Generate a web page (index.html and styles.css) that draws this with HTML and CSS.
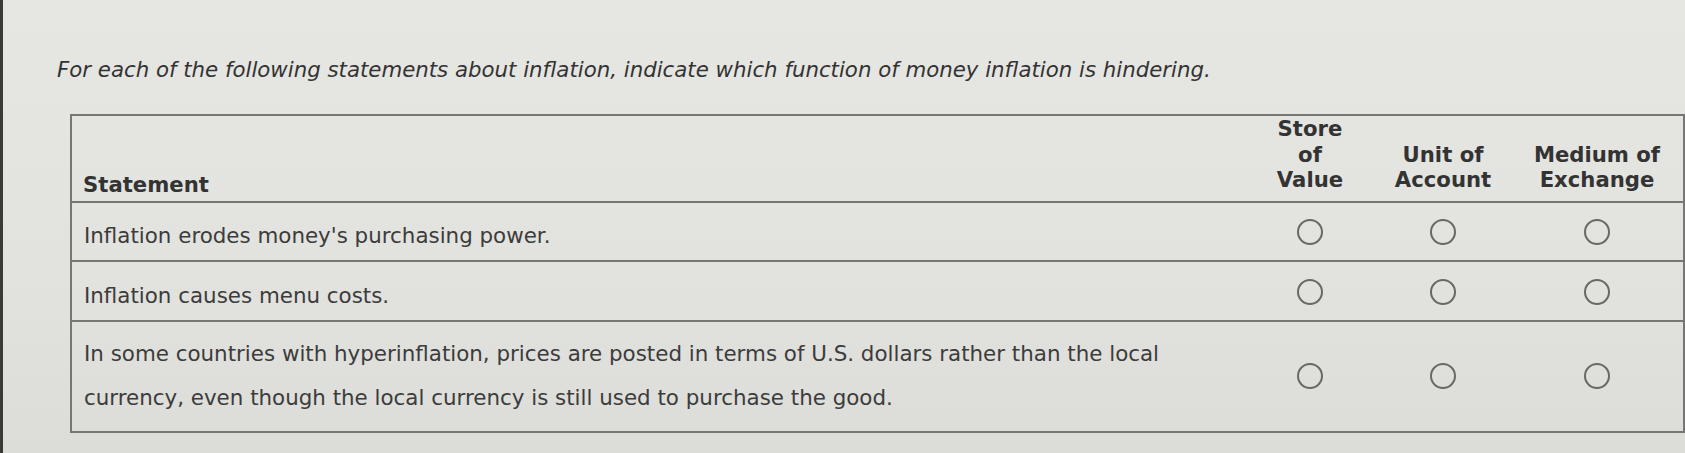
FILE: index.html
```html
<!DOCTYPE html>
<html>
<head>
<meta charset="utf-8">
<link rel="stylesheet" href="styles.css">
</head>
<body>
<div class="page">
  <p class="prompt">For each of the following statements about inflation, indicate which function of money inflation is hindering.</p>
  <table class="grid">
    <colgroup>
      <col class="c-stmt">
      <col class="c-store">
      <col class="c-unit">
      <col class="c-medium">
    </colgroup>
    <thead>
      <tr>
        <th class="h-stmt">Statement</th>
        <th class="h-opt">Store<br>of<br>Value</th>
        <th class="h-opt">Unit of<br>Account</th>
        <th class="h-opt">Medium of<br>Exchange</th>
      </tr>
    </thead>
    <tbody>
      <tr class="r1">
        <td class="stmt">Inflation erodes money's purchasing power.</td>
        <td class="opt"><span class="radio"></span></td>
        <td class="opt"><span class="radio"></span></td>
        <td class="opt"><span class="radio"></span></td>
      </tr>
      <tr class="r2">
        <td class="stmt">Inflation causes menu costs.</td>
        <td class="opt"><span class="radio"></span></td>
        <td class="opt"><span class="radio"></span></td>
        <td class="opt"><span class="radio"></span></td>
      </tr>
      <tr class="r3">
        <td class="stmt">In some countries with hyperinflation, prices are posted in terms of U.S. dollars rather than the local<br>currency, even though the local currency is still used to purchase the good.</td>
        <td class="opt"><span class="radio"></span></td>
        <td class="opt"><span class="radio"></span></td>
        <td class="opt"><span class="radio"></span></td>
      </tr>
    </tbody>
  </table>
</div>
</body>
</html>
```
FILE: styles.css
```css
html, body {
  margin: 0;
  padding: 0;
}
body {
  background: #e3e3df;
  font-family: "DejaVu Sans", Verdana, sans-serif;
  color: #3a3a3a;
  width: 1685px;
  height: 453px;
  overflow: hidden;
}
.page {
  border-left: 3px solid #3a3a38;
  height: 453px;
  box-sizing: border-box;
  padding-top: 57px;
  background: linear-gradient(180deg, #e6e6e2 0%, #e2e2de 60%, #dcdcd8 100%);
}
.prompt {
  margin: 0 0 0 54px;
  font-style: italic;
  font-size: 21.3px;
  line-height: 26px;
  color: #333;
}
.grid {
  margin: 31px 0 0 67px;
  width: 1613px;
  table-layout: fixed;
  border-collapse: collapse;
  border: 2px solid #767674;
}
.c-stmt { width: 1174px; }
.c-store { width: 130px; }
.c-unit { width: 136px; }
.c-medium { width: 173px; }
.grid th {
  font-weight: bold;
  font-size: 21.2px;
  line-height: 25.5px;
  color: #333;
  vertical-align: bottom;
}
.grid thead tr {
  border-bottom: 2px solid #767674;
}
.h-stmt {
  text-align: left;
  padding: 0 0 3px 11px;
}
.h-opt {
  text-align: center;
  padding: 0 0 8px 0;
}
.grid tbody tr {
  border-bottom: 2px solid #767674;
}
.grid td {
  box-sizing: border-box;
}
.stmt {
  font-size: 21.4px;
  line-height: 44px;
  color: #3c3c3c;
  padding: 0 0 0 12px;
  vertical-align: middle;
}
.r1 td {
  height: 59px;
}
.r2 td {
  height: 60px;
}
.r1 .stmt, .r2 .stmt {
  padding-top: 10px;
}
.r1 .opt, .r2 .opt {
  padding-top: 2px;
}
.r3 td { height: 111px; }
.opt {
  text-align: center;
  vertical-align: middle;
  padding: 0;
}
.radio {
  display: inline-block;
  width: 22px;
  height: 22px;
  border: 2.5px solid #686866;
  border-radius: 50%;
  vertical-align: middle;
}
```
